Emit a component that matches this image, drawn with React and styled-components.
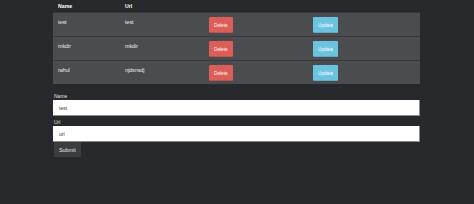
import React from 'react';
import styled, { createGlobalStyle } from 'styled-components';

// Page-wide reset and dark background
const GlobalStyle = createGlobalStyle`
  html, body {
    margin: 0;
    padding: 0;
    background: #27292d;
    font-family: "Liberation Sans", Arial, sans-serif;
    color: #e6e6e6;
  }
`;

// Main column holding the table and the form
const Page = styled.main`
  width: 367px;
  margin-left: 53px;
  height: 204px;
`;

const Table = styled.table`
  width: 100%;
  border-collapse: collapse;
  table-layout: fixed;
`;

const HeadCell = styled.th`
  width: ${(p) => p.$width || 'auto'};
  height: 12px;
  padding: 0 5px;
  text-align: left;
  font-size: 5.2px;
  font-weight: bold;
  color: #ffffff;
  vertical-align: middle;
`;

const Row = styled.tr`
  background: #4a4c4f;
  border-top: 1px solid #37393c;
`;

const Cell = styled.td`
  height: ${(p) => (p.$text ? '15px' : '16px')};
  padding: ${(p) => (p.$text ? '5px 5px 3px' : '4px 5px 3px')};
  font-size: 5.3px;
  line-height: 8px;
  color: #f0f0f0;
  vertical-align: top;
`;

// Small bootstrap-like action button
const ActionButton = styled.button`
  display: block;
  height: 16px;
  padding: 0 5px;
  border: none;
  border-radius: 1px;
  font-family: inherit;
  font-size: 4.7px;
  color: #ffffff;
  background: ${(p) => (p.$kind === 'danger' ? '#dd5d58' : '#6cc3df')};
  box-shadow: inset 0 -1px 0 rgba(0, 0, 0, 0.12);
`;

const Form = styled.form`
  display: flex;
  flex-direction: column;
  padding-top: 8px;
`;

const Label = styled.label`
  font-size: 5px;
  line-height: 8px;
  padding-left: 1px;
  color: #e0e0e0;
`;

const Input = styled.input`
  box-sizing: border-box;
  width: 100%;
  height: 16px;
  margin: 0 0 2px;
  padding: 0 6px;
  border: none;
  border-bottom: 1px solid #8a8b8d;
  border-right: 1px solid #8a8b8d;
  background: #ffffff;
  font-family: inherit;
  font-size: 5px;
  color: #333;
  outline: none;
`;

const SubmitButton = styled.button`
  align-self: flex-start;
  height: 15px;
  margin-left: 1px;
  margin-top: -2px;
  padding: 0 5px;
  border: none;
  background: #3b3d41;
  font-family: inherit;
  font-size: 5.4px;
  color: #e8e8e8;
`;

const links = [
  { id: 1, name: 'test', url: 'test' },
  { id: 2, name: 'mkdir', url: 'mkdir' },
  { id: 3, name: 'rahul', url: 'njdsnsdj' },
];

const LinkRow = ({ link }) => (
  <Row>
    <Cell $text>{link.name}</Cell>
    <Cell $text>{link.url}</Cell>
    <Cell>
      <ActionButton $kind="danger">Delete</ActionButton>
    </Cell>
    <Cell>
      <ActionButton $kind="info">Update</ActionButton>
    </Cell>
  </Row>
);

export default function App() {
  return (
    <>
      <GlobalStyle />
      <Page>
        <Table>
          <thead>
            <tr>
              <HeadCell $width="57px">Name</HeadCell>
              <HeadCell $width="74px">Url</HeadCell>
              <HeadCell $width="94px" />
              <HeadCell />
            </tr>
          </thead>
          <tbody>
            {links.map((link) => (
              <LinkRow key={link.id} link={link} />
            ))}
          </tbody>
        </Table>
        <Form onSubmit={(e) => e.preventDefault()}>
          <Label>Name</Label>
          <Input defaultValue="test" />
          <Label>Url</Label>
          <Input defaultValue="url" />
          <SubmitButton type="submit">Submit</SubmitButton>
        </Form>
      </Page>
    </>
  );
}
